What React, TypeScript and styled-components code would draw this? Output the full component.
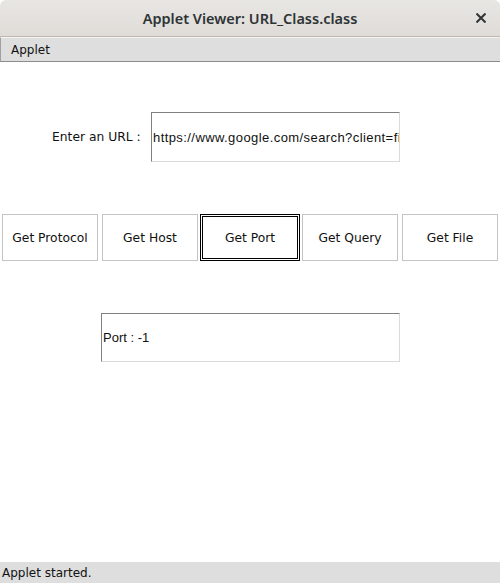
import React, { useState } from 'react';
import styled, { createGlobalStyle } from 'styled-components';

const GlobalStyle = createGlobalStyle`
  html, body {
    margin: 0;
    padding: 0;
    background: #ffffff;
  }
`;

const Window = styled.div`
  width: 500px;
  height: 583px;
  display: flex;
  flex-direction: column;
  background: #ffffff;
  overflow: hidden;
`;

const TitleBar = styled.div`
  height: 36px;
  flex: none;
  display: flex;
  align-items: center;
  justify-content: center;
  position: relative;
  background: linear-gradient(#e8e6e3, #dfdcd8);
  border-radius: 6px 6px 0 0;
  border-bottom: 1px solid #bfb8b0;
  font-family: 'Noto Sans', sans-serif;
  font-size: 14.5px;
  font-weight: 600;
  color: #2e3436;
`;

const CloseButton = styled.span`
  position: absolute;
  right: 14px;
  top: 13px;
  width: 10px;
  height: 10px;
  display: flex;
`;

const MenuBar = styled.div`
  height: 23px;
  flex: none;
  display: flex;
  align-items: center;
  padding-left: 10px;
  background: #dedede;
  border-top: 1px solid #f4f4f4;
  border-left: 1px solid #a0a0a0;
  border-bottom: 1px solid #8c8c8c;
  font-family: 'DejaVu Sans', sans-serif;
  font-size: 12px;
  color: #111;
`;

const Applet = styled.div`
  flex: 1;
  display: flex;
  flex-direction: column;
  font-family: 'DejaVu Sans', sans-serif;
  font-size: 12.3px;
  color: #111;
`;

const UrlRow = styled.div`
  display: flex;
  align-items: center;
  margin-top: 50px;
  padding-left: 52px;
  height: 50px;
`;

const Label = styled.span`
  width: 99px;
`;

const Field = styled.input`
  box-sizing: border-box;
  width: 249px;
  height: 50px;
  margin: 0;
  padding: 0 0 0 1px;
  border: 1px solid #dadada;
  border-top-color: #808080;
  border-left-color: #808080;
  outline: none;
  background: #fff;
  font-family: 'Liberation Sans', Arial, sans-serif;
  font-size: 13px;
  letter-spacing: 0.42px;
  color: #111;
`;

const ButtonRow = styled.div`
  display: flex;
  gap: 4px;
  margin-top: 52px;
  padding-left: 2px;
`;

const Button = styled.button<{ $focused?: boolean }>`
  box-sizing: border-box;
  width: ${(p) => (p.$focused ? '100px' : '96px')};
  margin: ${(p) => (p.$focused ? '0 -2px' : '0')};
  height: 47px;
  padding: 0;
  background: #fff;
  border: ${(p) => (p.$focused ? '1px solid #000' : '1px solid #c4c4c4')};
  outline: ${(p) => (p.$focused ? '1px solid #000' : 'none')};
  outline-offset: -3px;
  font-family: 'DejaVu Sans', sans-serif;
  font-size: 12.3px;
  color: #111;
  cursor: pointer;
`;

const Output = styled.div`
  box-sizing: border-box;
  width: 299px;
  height: 49px;
  margin: 52px 0 0 101px;
  display: flex;
  align-items: center;
  padding-left: 1px;
  border: 1px solid #dadada;
  border-top-color: #808080;
  border-left-color: #808080;
  font-family: 'Liberation Sans', Arial, sans-serif;
  font-size: 13px;
  color: #111;
`;

const StatusBar = styled.div`
  height: 21px;
  flex: none;
  display: flex;
  align-items: center;
  padding-left: 2px;
  background: #dedede;
  font-family: 'DejaVu Sans', sans-serif;
  font-size: 12px;
  color: #111;
`;

const labels = ['Get Protocol', 'Get Host', 'Get Port', 'Get Query', 'Get File'];

const App = () => {
  const [url, setUrl] = useState(
    'https://www.google.com/search?client=firefox-b-d&q=java',
  );
  const [focused, setFocused] = useState('Get Port');

  return (
    <Window>
      <GlobalStyle />
      <TitleBar>
        Applet Viewer: URL_Class.class
        <CloseButton>
          <svg width="10" height="10" viewBox="0 0 10 10">
            <path
              d="M1.2 1.2 L8.8 8.8 M8.8 1.2 L1.2 8.8"
              stroke="#2e3436"
              strokeWidth="2"
              strokeLinecap="square"
            />
          </svg>
        </CloseButton>
      </TitleBar>
      <MenuBar>Applet</MenuBar>
      <Applet>
        <UrlRow>
          <Label>Enter an URL :</Label>
          <Field value={url} onChange={(e) => setUrl(e.target.value)} />
        </UrlRow>
        <ButtonRow>
          {labels.map((item) => (
            <Button
              key={item}
              $focused={item === focused}
              onClick={() => setFocused(item)}
            >
              {item}
            </Button>
          ))}
        </ButtonRow>
        <Output>Port : -1</Output>
      </Applet>
      <StatusBar>Applet started.</StatusBar>
    </Window>
  );
};

export default App;
